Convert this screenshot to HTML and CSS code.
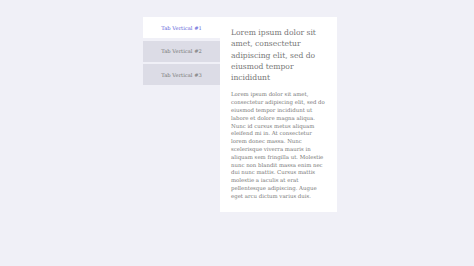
FILE: index.html
```html
<!DOCTYPE html>
<html>
<head>
<meta charset="utf-8">
<link rel="stylesheet" href="styles.css">
</head>
<body>
<div class="tabs">
  <div class="tab-list">
    <div class="tab active">Tab Vertical #1</div>
    <div class="tab">Tab Vertical #2</div>
    <div class="tab">Tab Vertical #3</div>
  </div>
  <div class="panel">
    <h2 class="title">Lorem ipsum dolor sit amet, consectetur adipiscing elit, sed do eiusmod tempor incididunt</h2>
    <p class="text">Lorem ipsum dolor sit amet, consectetur adipiscing elit, sed do eiusmod tempor incididunt ut labore et dolore magna aliqua. Nunc id cursus metus aliquam eleifend mi in. At consectetur lorem donec massa. Nunc scelerisque viverra mauris in aliquam sem fringilla ut. Molestie nunc non blandit massa enim nec dui nunc mattis. Cursus mattis molestie a iaculis at erat pellentesque adipiscing. Augue eget arcu dictum varius duis.</p>
  </div>
</div>
</body>
</html>
```
FILE: styles.css
```css
html, body {
  margin: 0;
  padding: 0;
  background: #f0f0f7;
  height: 100%;
}
body {
  font-family: "DejaVu Serif", serif;
  color: #777777;
}
.tabs {
  display: flex;
  align-items: flex-start;
  margin-left: 143px;
  padding-top: 17px;
  width: 194px;
}
.tab-list {
  display: flex;
  flex-direction: column;
  gap: 2.5px;
  width: 77px;
  flex: none;
}
.tab {
  height: 21px;
  display: flex;
  align-items: center;
  justify-content: center;
  background: #dcdce6;
  font-size: 5.2px;
  color: #777777;
}
.tab.active {
  background: #ffffff;
  color: #6060d8;
}
.panel {
  background: #ffffff;
  flex: 1;
  padding: 10px 11px 11px 11px;
}
.title {
  margin: 0 0 8px 0;
  font-size: 7.6px;
  font-weight: normal;
  line-height: 11.3px;
}
.text {
  margin: 0;
  font-size: 5.4px;
  line-height: 7.8px;
}
```
